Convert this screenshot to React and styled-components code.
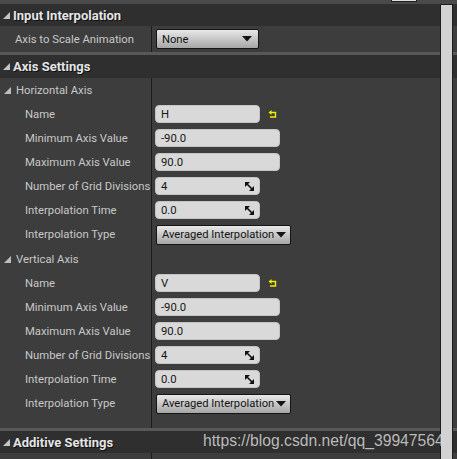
import styled, { createGlobalStyle } from 'styled-components'

const GlobalStyle = createGlobalStyle`
  html, body {
    margin: 0;
    padding: 0;
    background: #3d3d3d;
  }
`

const Panel = styled.div`
  position: relative;
  width: 457px;
  height: 459px;
  overflow: hidden;
  background: #3d3d3d;
  font-family: Roboto, "Liberation Sans", sans-serif;
  font-size: 11.3px;
  color: #c8c8c8;
`

const TopStrip = styled.div`
  height: 4px;
  background: #4a4a4a;
  display: flex;
  padding-left: 391px;

  .search-edge {
    width: 24px;
    height: 1px;
    background: #dcdcdc;
    border: 1px solid #222;
    border-top: none;
  }
`

const Separator = styled.div`
  height: 3px;
  background: #585858;
`

const Header = styled.div`
  height: ${p => p.$h || 22}px;
  background: #2f2f2f;
  display: flex;
  align-items: center;
  padding-left: 3px;
  gap: 3px;
  font-size: 13px;
  font-weight: 700;
  color: #e4e4e4;
  text-shadow: 1px 1px 0 #111;
`

const Row = styled.div`
  display: grid;
  grid-template-columns: 152px 1fr;
  height: ${p => p.$h || 24}px;
`

const Label = styled.div`
  display: flex;
  align-items: center;
  gap: 5px;
  padding-left: ${p => p.$indent}px;
  border-right: 1px solid #1c1c1c;
  color: #c8c8c8;
  white-space: nowrap;
`

const Value = styled.div`
  display: flex;
  align-items: center;
  padding-left: 3px;
  gap: 8px;
`

const TextBox = styled.div`
  box-sizing: border-box;
  width: ${p => p.$w}px;
  height: 18px;
  background: #d9d9d9;
  border: 1px solid #c4c4c4;
  border-radius: 4px;
  display: flex;
  align-items: center;
  justify-content: space-between;
  padding: 0 5px;
  color: #161616;
`

const Combo = styled.div`
  box-sizing: border-box;
  width: ${p => p.$w}px;
  height: 20px;
  margin-left: 1px;
  border: 1px solid #151515;
  border-radius: 2px;
  background: linear-gradient(#e8e8e8, #a6a6a6);
  display: flex;
  align-items: center;
  justify-content: ${p => (p.$tight ? 'flex-start' : 'space-between')};
  gap: 2px;
  padding: 0 6px 0 5px;
  color: #141414;
  font-size: 11.2px;
  white-space: nowrap;

  svg {
    flex-shrink: 0;
  }
`

const Scrollbar = styled.div`
  position: absolute;
  left: 440px;
  top: 4px;
  bottom: 0;
  width: 11px;
  background: #d2d2d2;
  border: 1px solid #1e1e1e;
  border-bottom: none;
`

const Watermark = styled.div`
  position: absolute;
  left: 203px;
  top: 431px;
  font-family: "Liberation Sans", Arial, sans-serif;
  font-size: 15.7px;
  line-height: 20px;
  white-space: nowrap;
  color: rgba(220, 220, 220, 0.82);
`

const Expander = ({ color = '#bdbdbd' }) => (
  <svg width="7" height="7" viewBox="0 0 7 7">
    <polygon points="0,7 7,7 7,0" fill={color} />
  </svg>
)

const ComboArrow = () => (
  <svg width="10" height="6" viewBox="0 0 10 6">
    <polygon points="0,0 10,0 5,5.5" fill="#141414" />
  </svg>
)

const SpinIcon = () => (
  <svg width="9" height="9" viewBox="0 0 9 9">
    <polygon points="0,0 5,0 0,5" fill="#111" />
    <polygon points="9,9 4,9 9,4" fill="#111" />
    <line x1="1" y1="1" x2="8" y2="8" stroke="#111" strokeWidth="1.6" />
  </svg>
)

const ResetIcon = () => (
  <svg width="9" height="9" viewBox="0 0 9 9">
    <path d="M3 2.5 H7.5 V7 H2" fill="none" stroke="#f0f000" strokeWidth="1.4" />
    <polygon points="0.5,2.5 3.5,0 3.5,5" fill="#f0f000" />
  </svg>
)

const Prop = ({ label, indent = 25, h, children }) => (
  <Row $h={h}>
    <Label $indent={indent}>{label}</Label>
    <Value>{children}</Value>
  </Row>
)

const Group = ({ label }) => (
  <Row>
    <Label $indent={4}>
      <Expander />
      <span>{label}</span>
    </Label>
    <Value />
  </Row>
)

const AxisBlock = ({ title, name }) => (
  <>
    <Group label={title} />
    <Prop label="Name">
      <TextBox $w={105}>{name}</TextBox>
      <ResetIcon />
    </Prop>
    <Prop label="Minimum Axis Value">
      <TextBox $w={125}>-90.0</TextBox>
    </Prop>
    <Prop label="Maximum Axis Value">
      <TextBox $w={125}>90.0</TextBox>
    </Prop>
    <Prop label="Number of Grid Divisions">
      <TextBox $w={105}>4<SpinIcon /></TextBox>
    </Prop>
    <Prop label="Interpolation Time">
      <TextBox $w={105}>0.0<SpinIcon /></TextBox>
    </Prop>
    <Prop label="Interpolation Type" h={25}>
      <Combo $w={135} $tight>Averaged Interpolation<ComboArrow /></Combo>
    </Prop>
  </>
)

const App = () => (
  <Panel>
    <GlobalStyle />
    <TopStrip>
      <div className="search-edge" />
    </TopStrip>

    <Header>
      <Expander color="#c4c4c4" />
      Input Interpolation
    </Header>
    <Prop label="Axis to Scale Animation" indent={15} h={26}>
      <Combo $w={103}>None<ComboArrow /></Combo>
    </Prop>

    <Separator />
    <Header $h={23}>
      <Expander color="#c4c4c4" />
      Axis Settings
    </Header>
    <AxisBlock title="Horizontal Axis" name="H" />
    <AxisBlock title="Vertical Axis" name="V" />
    <Prop label="" h={12} />

    <Separator />
    <Header>
      <Expander color="#c4c4c4" />
      Additive Settings
    </Header>
    <Prop label="" h={24} />

    <Scrollbar />
    <Watermark>https://blog.csdn.net/qq_39947564</Watermark>
  </Panel>
)

export default App
